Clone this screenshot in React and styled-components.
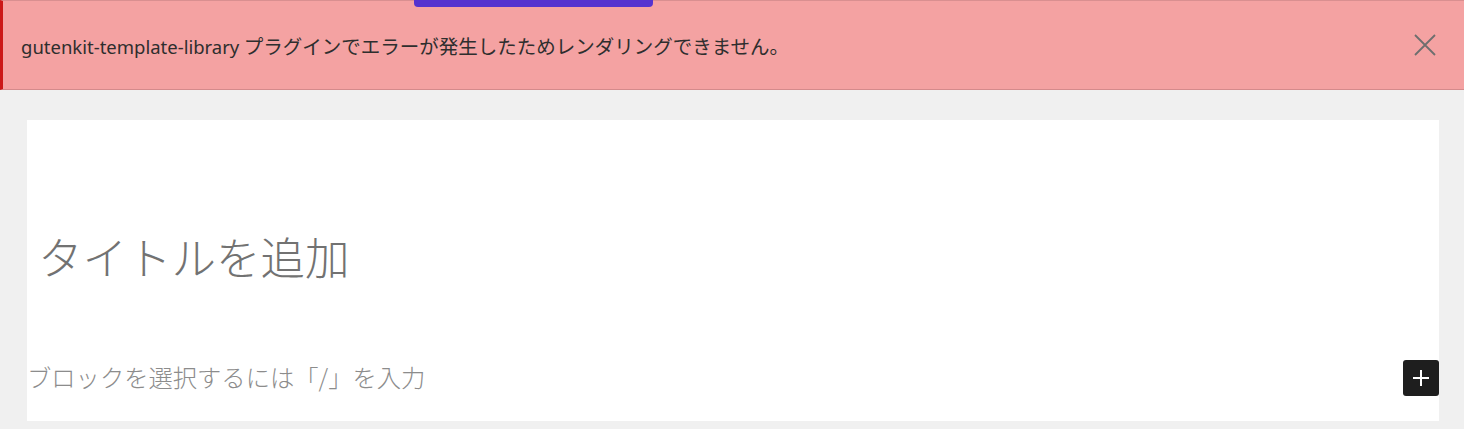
import React from 'react'
import styled, { createGlobalStyle } from 'styled-components'

const GlobalStyle = createGlobalStyle`
  html, body {
    margin: 0;
    padding: 0;
    background: #f0f0f0;
    font-family: "Noto Sans", "Noto Sans CJK JP", sans-serif;
  }
`

const Page = styled.div`
  position: relative;
  width: 1464px;
  height: 429px;
  overflow: hidden;
  background: #f0f0f0;
`

// purple tab peeking from behind the notice
const TopTab = styled.div`
  position: absolute;
  top: 0;
  left: 414px;
  width: 239px;
  height: 7px;
  background: #5533cf;
  border-radius: 0 0 4px 4px;
  z-index: 2;
`

const Notice = styled.div`
  display: flex;
  align-items: center;
  justify-content: space-between;
  height: 90px;
  box-sizing: border-box;
  background: #f4a2a2;
  border-top: 1px solid #d98f90;
  border-bottom: 1px solid #d48a8b;
  border-left: 3px solid #cc1818;
  padding: 0 27px 0 18px;
`

const NoticeText = styled.p`
  margin: 0;
  font-size: 19.5px;
  color: #2e2e2e;
  font-family: "Noto Sans CJK JP", sans-serif;
`

const PluginName = styled.span`
  font-size: 18.5px;
  font-family: "Noto Sans", sans-serif;
`

const CloseButton = styled.button`
  display: flex;
  align-items: center;
  justify-content: center;
  width: 24px;
  height: 24px;
  padding: 0;
  border: none;
  background: transparent;
  cursor: pointer;
  svg {
    width: 24px;
    height: 24px;
  }
`

const Body = styled.div`
  padding: 30px 25px 8px 27px;
`

const Canvas = styled.div`
  display: flex;
  flex-direction: column;
  height: 301px;
  box-sizing: border-box;
  background: #fff;
  padding-top: 106px;
`

const Title = styled.h1`
  margin: 0 0 74px;
  padding-left: 11px;
  font-size: 44.5px;
  line-height: 60px;
  font-weight: 300;
  color: #727272;
  font-family: "Noto Sans CJK JP", sans-serif;
`

const BlockRow = styled.div`
  display: flex;
  align-items: center;
  justify-content: space-between;
  height: 36px;
`

const Placeholder = styled.span`
  font-size: 24.3px;
  line-height: 32px;
  margin-top: -3px;
  color: #8c8c8c;
  font-family: "Noto Sans CJK JP", sans-serif;
  font-weight: 300;
`

const AddButton = styled.button`
  display: flex;
  align-items: center;
  justify-content: center;
  width: 36px;
  height: 36px;
  padding: 0;
  border: none;
  border-radius: 3px;
  background: #1e1e1e;
  cursor: pointer;
`

const App = () => {
  return (
    <Page>
      <GlobalStyle />
      <TopTab />
      <Notice>
        <NoticeText>
          <PluginName>gutenkit-template-library</PluginName> プラグインでエラーが発生したためレンダリングできません。
        </NoticeText>
        <CloseButton aria-label="閉じる">
          <svg viewBox="0 0 24 24">
            <path d="M2 2 L22 22 M22 2 L2 22" stroke="#6e6e6e" strokeWidth="1.8" fill="none" />
          </svg>
        </CloseButton>
      </Notice>
      <Body>
        <Canvas>
          <Title>タイトルを追加</Title>
          <BlockRow>
            <Placeholder>ブロックを選択するには「/」を入力</Placeholder>
            <AddButton aria-label="ブロックを追加">
              <svg width="20" height="20" viewBox="0 0 20 20">
                <path d="M10 2 V18 M2 10 H18" stroke="#fff" strokeWidth="2" />
              </svg>
            </AddButton>
          </BlockRow>
        </Canvas>
      </Body>
    </Page>
  )
}

export default App
